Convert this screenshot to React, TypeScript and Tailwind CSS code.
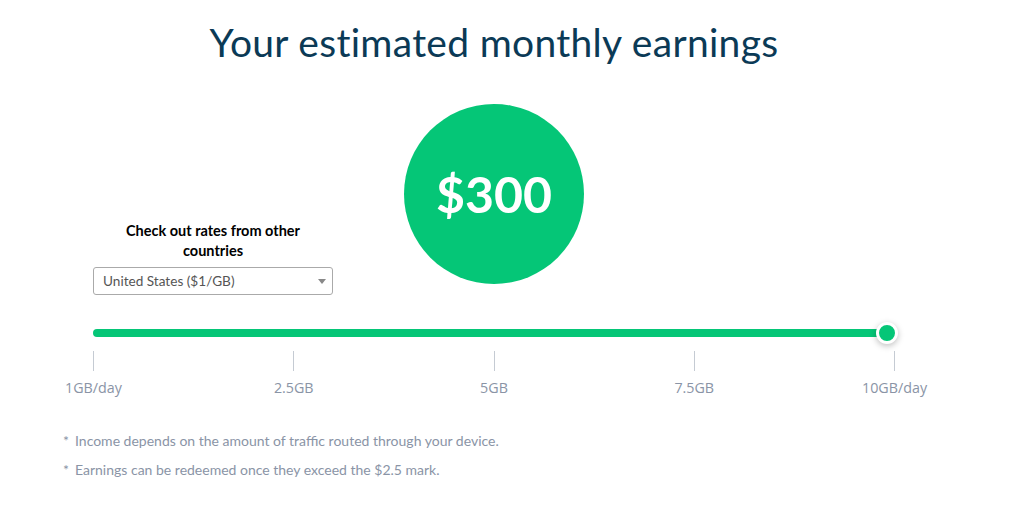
import React from 'react';

const ticks = ['1GB/day', '2.5GB', '5GB', '7.5GB', '10GB/day'];

export default function App() {
  return (
    <div className="w-[1013px] h-[529px] bg-white font-['Lato',sans-serif]">
      <div className="w-[988px] flex flex-col items-center">
        <h1 className="mt-[18px] text-[39px] leading-[48px] text-[#0b3a56] tracking-[0.3px]">
          Your estimated monthly earnings
        </h1>

        <div className="w-[802px] grid grid-cols-[240px_1fr_240px] mt-[38px]">
          <div className="flex flex-col items-center justify-end">
            <p className="text-[14.5px] leading-[20px] font-bold text-black text-center w-[210px]">
              Check out rates from other countries
            </p>
            <div className="mt-[6px] w-[240px] h-[28px] border border-[#aaaaaa] rounded-[3px] flex items-center justify-between pl-[9px] pr-[6px] mb-[-11px]">
              <span className="text-[13.6px] text-[#555555]">United States ($1/GB)</span>
              <span className="w-0 h-0 border-l-[4px] border-r-[4px] border-t-[5px] border-l-transparent border-r-transparent border-t-[#888888]" />
            </div>
          </div>
          <div className="flex justify-center">
            <div className="w-[180px] h-[180px] rounded-full bg-[#05c677] flex items-center justify-center">
              <span className="text-[50px] font-bold text-white leading-none">$300</span>
            </div>
          </div>
          <div />
        </div>

        <div className="w-[802px] mt-[39px]">
          <div className="relative h-[20px] flex items-center">
            <div className="h-[8px] w-[794px] rounded-full bg-[#05c677]" />
            <div className="absolute left-[783px] top-[-1px] w-[22px] h-[22px] rounded-full bg-[#05c677] border-[3px] border-white shadow-[0_2px_6px_rgba(0,0,0,0.25)]" />
          </div>
          <div className="flex justify-between mt-[8px]">
            {ticks.map((t) => (
              <div key={t} className="w-px h-[20px] bg-[#c5cbd3]" />
            ))}
          </div>
          <div className="flex justify-between mt-[7px]">
            {ticks.map((t) => (
              <div key={t} className="w-px flex justify-center">
                <span className="text-[14.3px] leading-[20px] text-[#8a94a6] whitespace-nowrap font-['Open_Sans',sans-serif]">
                  {t}
                </span>
              </div>
            ))}
          </div>
        </div>

        <div className="w-[862px] mt-[33px] flex flex-col gap-[9px] text-[14px] leading-[20px] text-[#8a94a6]">
          <p>
            <span className="inline-block w-[12px]">*</span>Income depends on the amount of traffic routed through your device.
          </p>
          <p>
            <span className="inline-block w-[12px]">*</span>Earnings can be redeemed once they exceed the $2.5 mark.
          </p>
        </div>
      </div>
    </div>
  );
}
